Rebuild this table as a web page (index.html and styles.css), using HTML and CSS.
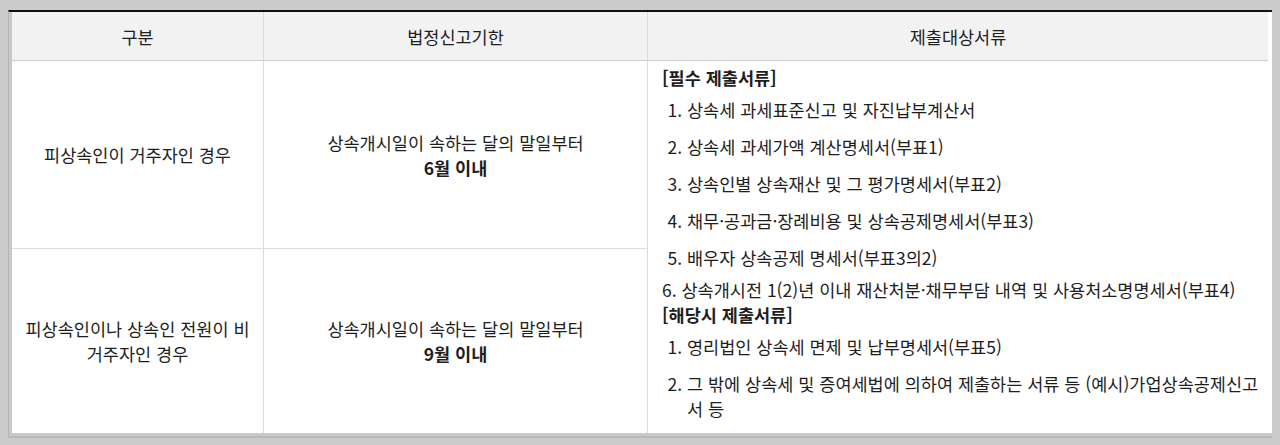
FILE: index.html
```html
<!DOCTYPE html>
<html lang="ko">
<head>
<meta charset="utf-8">
<title>상속세 신고기한 및 제출서류</title>
<link rel="stylesheet" href="styles.css">
</head>
<body>
<div class="sheet">
  <div class="grid">
    <div class="cell head">구분</div>
    <div class="cell head">법정신고기한</div>
    <div class="cell head last">제출대상서류</div>

    <div class="cell center r1"><p>피상속인이 거주자인 경우</p></div>
    <div class="cell center r1"><p>상속개시일이 속하는 달의 말일부터<br><b>6월 이내</b></p></div>

    <div class="cell docs last">
      <b>[필수 제출서류]</b>
      <ol class="list">
        <li>상속세 과세표준신고 및 자진납부계산서</li>
        <li>상속세 과세가액 계산명세서(부표1)</li>
        <li>상속인별 상속재산 및 그 평가명세서(부표2)</li>
        <li>채무·공과금·장례비용 및 상속공제명세서(부표3)</li>
        <li>배우자 상속공제 명세서(부표3의2)</li>
      </ol>
      <div>6. 상속개시전 1(2)년 이내 재산처분·채무부담 내역 및 사용처소명명세서(부표4)</div>
      <b>[해당시 제출서류]</b>
      <ol class="list">
        <li>영리법인 상속세 면제 및 납부명세서(부표5)</li>
        <li><span class="nowrap">그 밖에 상속세 및 증여세법에 의하여 제출하는 서류 등 (예시)가업상속공제신고</span><br>서 등</li>
      </ol>
    </div>

    <div class="cell center r2"><p>피상속인이나 상속인 전원이 비<br>거주자인 경우</p></div>
    <div class="cell center r2"><p>상속개시일이 속하는 달의 말일부터<br><b>9월 이내</b></p></div>
  </div>
</div>
</body>
</html>
```
FILE: styles.css
```css
html, body {
  margin: 0;
  background: #cbcbcb;
}
body {
  font-family: "Noto Sans CJK KR", "Noto Sans", sans-serif;
  font-size: 17.5px;
  color: #1e1e1e;
}
.sheet {
  margin: 10px 0 0 8px;
  width: 1260px;
  border-top: 2px solid #111;
  border-left: 1px solid #b4b4b4;
  padding-left: 3px;
  padding-bottom: 3px;
  border-bottom: 2px solid #b8b8b8;
  background: #c9c9c9;
}
.grid {
  display: grid;
  grid-template-columns: 252px 384px 620px;
  grid-template-rows: 49px 188px 184px;
  background: #fff;
}
.cell {
  border-right: 1px solid #dcdcdc;
  border-bottom: 1px solid #dcdcdc;
  line-height: 25px;
}
.cell.last {
  border-right: none;
}
.head {
  background: #f2f2f2;
  border-bottom-color: #cfcfcf;
  display: flex;
  align-items: center;
  justify-content: center;
}
.center {
  display: flex;
  align-items: center;
  justify-content: center;
  text-align: center;
  padding: 0 6px;
}
.center p {
  margin: 0;
}
.r1 {
  grid-row: 2;
}
.r2 {
  grid-row: 3;
  border-bottom: none;
}
.docs {
  grid-column: 3;
  grid-row: 2 / span 2;
  border-bottom: none;
  padding: 4px 0 10px 14px;
  overflow: visible;
}
.list {
  margin: 7px 0;
  padding-left: 25px;
}
.list li + li {
  margin-top: 12px;
}
.nowrap {
  white-space: nowrap;
}
b {
  font-weight: 700;
}
```
